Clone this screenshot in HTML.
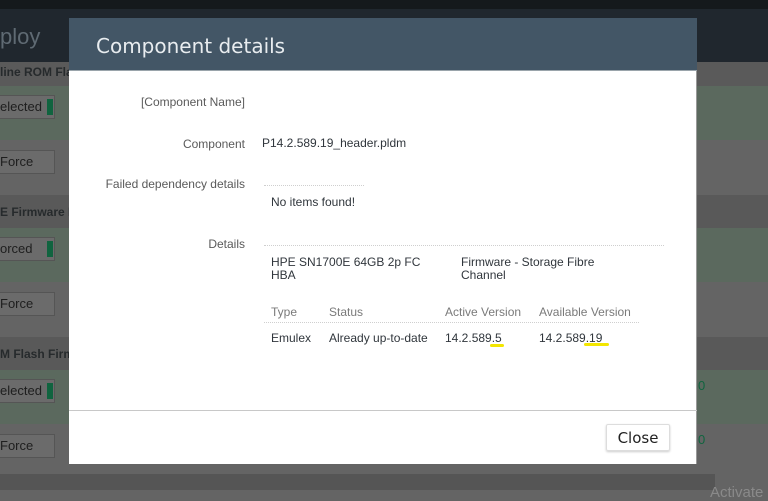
<!DOCTYPE html>
<html><head><style>
*{margin:0;padding:0;box-sizing:border-box}
body{width:768px;height:499px;overflow:hidden;background:#646464;font-family:"Liberation Sans",Arial,Helvetica,sans-serif;position:relative}
.a{position:absolute}
.sec{color:#262a2c;font-weight:bold;font-size:12px;left:0}
.btn{position:absolute;left:-10px;width:65px;height:24px;border:1px solid #555;background:#6b6b6b;color:#1e1e1e;font-size:13px;padding:3px 0 0 9px}
.btn .g{position:absolute;left:56px;top:3px;width:6px;height:16px;background:#10643f}
.l{position:absolute;color:#5a5a5a;font-size:12px;text-align:right;width:170px;left:75px}
.t{position:absolute;color:#30363c;font-size:12px;line-height:13px}
.h{position:absolute;color:#7a7a7a;font-size:12px}
.dot{position:absolute;border-top:1px dotted #cfcfcf;height:0}
.hl{position:absolute;height:3px;background:#f3e600;border-radius:2px}
</style></head><body>
<div class="a" style="left:0;top:0;width:768px;height:9px;background:#15191c"></div>
<div class="a" style="left:0;top:9px;width:768px;height:53px;background:#20272e"></div>
<div class="a" style="left:0;top:24px;color:#5f6a73;font-size:22px">ploy</div>
<div class="a" style="left:0;top:62px;width:768px;height:24px;background:#5a5a5a"></div>
<div class="a sec" style="top:65px">line ROM Flash</div>
<div class="a" style="left:0;top:86px;width:768px;height:54px;background:#5b695e"></div>
<div class="btn" style="top:95px">elected<span class="g"></span></div>
<div class="btn" style="top:150px">Force</div>
<div class="a" style="left:0;top:195px;width:768px;height:33px;background:#595959"></div>
<div class="a sec" style="top:205px">E Firmware Fl</div>
<div class="a" style="left:0;top:228px;width:768px;height:54px;background:#5b695e"></div>
<div class="btn" style="top:237px">orced<span class="g"></span></div>
<div class="btn" style="top:292px">Force</div>
<div class="a" style="left:0;top:337px;width:768px;height:33px;background:#595959"></div>
<div class="a sec" style="top:347px">M Flash Firm</div>
<div class="a" style="left:0;top:370px;width:768px;height:54px;background:#5b695e"></div>
<div class="btn" style="top:379px">elected<span class="g"></span></div>
<div class="btn" style="top:434px">Force</div>
<div class="a" style="left:698px;top:378px;color:#10643f;font-size:13px">0</div>
<div class="a" style="left:698px;top:432px;color:#10643f;font-size:13px">0</div>
<div class="a" style="left:0;top:474px;width:715px;height:16px;background:#555"></div>
<div class="a" style="left:710px;top:484px;color:#8a8a8a;font-size:15px">Activate</div>

<div class="a" style="left:69px;top:18px;width:628px;height:446px;background:#fff;border-right:1px solid #999">
<div class="a" style="left:0;top:0;width:628px;height:53px;background:#435666;border-bottom:1px solid #9aa4ab"></div>
<div class="a" style="left:27px;top:16px;color:#e8ecef;font-size:20px;font-family:'DejaVu Sans',sans-serif">Component details</div>
<div class="a" style="left:0;top:392px;width:628px;height:1px;background:#c8c8c8"></div>
<div class="a" style="left:537px;top:406px;width:64px;height:27px;border:1px solid #ddd;border-radius:2px;box-shadow:0 1px 2px #ccc;font-size:15px;color:#222;text-align:center;padding-top:4px;font-family:'DejaVu Sans',sans-serif">Close</div>
</div>

<div class="l" style="top:95px">[Component Name]</div>
<div class="l" style="top:137px">Component</div>
<div class="t" style="left:262px;top:137px">P14.2.589.19_header.pldm</div>
<div class="l" style="top:177px">Failed dependency details</div>
<div class="dot" style="left:264px;top:185px;width:100px"></div>
<div class="t" style="left:271px;top:196px">No items found!</div>
<div class="l" style="top:237px">Details</div>
<div class="dot" style="left:264px;top:245px;width:400px"></div>
<div class="t" style="left:271px;top:256px">HPE SN1700E 64GB 2p FC<br>HBA</div>
<div class="t" style="left:461px;top:256px">Firmware - Storage Fibre<br>Channel</div>
<div class="h" style="left:271px;top:305px">Type</div>
<div class="h" style="left:329px;top:305px">Status</div>
<div class="h" style="left:445px;top:305px">Active Version</div>
<div class="h" style="left:539px;top:305px">Available Version</div>
<div class="dot" style="left:264px;top:322px;width:375px"></div>
<div class="t" style="left:271px;top:332px">Emulex</div>
<div class="t" style="left:329px;top:332px">Already up-to-date</div>
<div class="t" style="left:445px;top:332px">14.2.589.5</div>
<div class="t" style="left:539px;top:332px">14.2.589.19</div>
<div class="hl" style="left:490px;top:344px;width:14px"></div>
<div class="hl" style="left:584px;top:343px;width:25px"></div>
</body></html>
